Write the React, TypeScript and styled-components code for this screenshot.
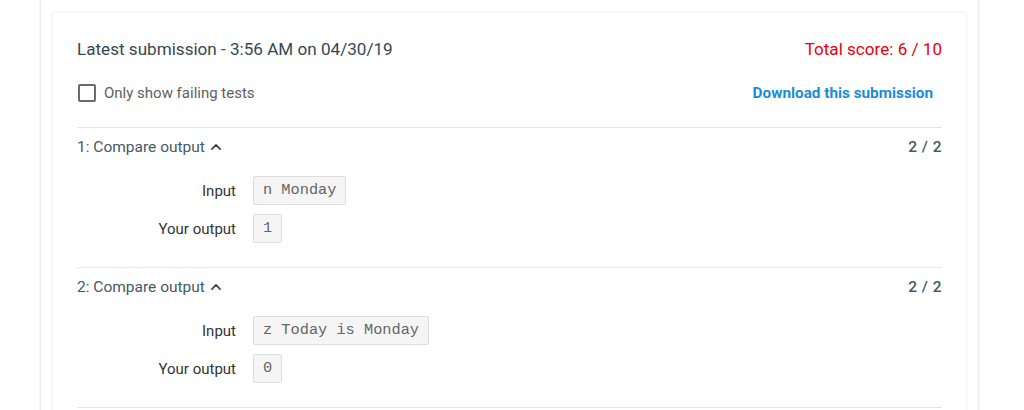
import React from "react";
import styled, { createGlobalStyle } from "styled-components";

const Global = createGlobalStyle`
  html, body { margin: 0; padding: 0; background: #ffffff; }
  body { font-family: Roboto, "Liberation Sans", Arial, sans-serif; overflow: hidden; }
`;

const Page = styled.div`
  width: 1024px;
  height: 410px;
  overflow: hidden;
`;

const Outer = styled.div`
  margin: -10px 0 0 41px;
  width: 937px;
  box-sizing: border-box;
  padding: 23px 12px 0 12px;
  background: #fff;
  box-shadow: 0 0 3px rgba(0, 0, 0, 0.18);
  min-height: 460px;
`;

const Card = styled.div`
  background: #fff;
  box-shadow: 0 0 3px rgba(0, 0, 0, 0.12);
  padding: 24px 24px 0 24px;
  min-height: 420px;
`;

const HeaderRow = styled.div`
  display: flex;
  justify-content: space-between;
  align-items: center;
  height: 23px;
`;

const Title = styled.div`
  font-size: 17.1px;
  color: #37474f;
`;

const TotalScore = styled.div`
  font-size: 17.1px;
  color: #e8000b;
`;

const ControlsRow = styled.div`
  display: flex;
  justify-content: space-between;
  align-items: center;
  margin-top: 23px;
  height: 20px;
  padding-bottom: 24px;
  border-bottom: 1px solid #e6e6e6;
`;

const CheckLabel = styled.label`
  display: flex;
  align-items: center;
  gap: 8px;
  font-size: 15px;
  color: #616161;
`;

const Box = styled.span`
  width: 14px;
  height: 14px;
  border: 2px solid #6b6b6b;
  border-radius: 2px;
  margin-left: 1px;
`;

const DownloadLink = styled.a`
  font-size: 15.3px;
  font-weight: 700;
  color: #1b8dd6;
  text-decoration: none;
  padding-right: 9px;
`;

const Test = styled.div`
  border-bottom: 1px solid #e6e6e6;
  padding: 10px 0 24px;
`;

const TestHeader = styled.div`
  display: flex;
  justify-content: space-between;
  align-items: center;
  height: 18px;
`;

const TestName = styled.div`
  display: flex;
  align-items: center;
  gap: 4px;
  font-size: 15.5px;
  color: #455a64;
`;

const TestScore = styled.div`
  font-size: 15.5px;
  font-weight: 500;
  color: #455a64;
  letter-spacing: 0.5px;
`;

const Rows = styled.div`
  display: grid;
  grid-template-columns: 159px auto;
  column-gap: 17px;
  row-gap: 9px;
  justify-content: start;
  align-items: center;
  margin-top: 20px;
`;

const Label = styled.div`
  text-align: right;
  font-size: 15px;
  color: #333;
`;

const Code = styled.code`
  justify-self: start;
  font-family: "Liberation Mono", "Courier New", monospace;
  font-size: 15.3px;
  line-height: 27px;
  color: #666;
  background: #f5f5f5;
  border: 1px solid #dedede;
  border-radius: 2px;
  padding: 0 9px;
  white-space: pre;
`;

const Chevron = () => (
  <svg width="14" height="14" viewBox="0 0 24 24" fill="none" stroke="#37474f" strokeWidth="3" strokeLinecap="round" strokeLinejoin="round">
    <polyline points="5 15.5 12 8.5 19 15.5" />
  </svg>
);

const tests = [
  { id: 1, input: "n Monday", output: "1", score: "2 / 2" },
  { id: 2, input: "z Today is Monday", output: "0", score: "2 / 2" },
];

export default function App() {
  return (
    <Page>
      <Global />
      <Outer>
        <Card>
          <HeaderRow>
            <Title>Latest submission - 3:56 AM on 04/30/19</Title>
            <TotalScore>Total score: 6 / 10</TotalScore>
          </HeaderRow>
          <ControlsRow>
            <CheckLabel>
              <Box />
              Only show failing tests
            </CheckLabel>
            <DownloadLink href="#">Download this submission</DownloadLink>
          </ControlsRow>
          {tests.map((t) => (
            <Test key={t.id}>
              <TestHeader>
                <TestName>
                  {t.id}: Compare output <Chevron />
                </TestName>
                <TestScore>{t.score}</TestScore>
              </TestHeader>
              <Rows>
                <Label>Input</Label>
                <Code>{t.input}</Code>
                <Label>Your output</Label>
                <Code>{t.output}</Code>
              </Rows>
            </Test>
          ))}
        </Card>
      </Outer>
    </Page>
  );
}
